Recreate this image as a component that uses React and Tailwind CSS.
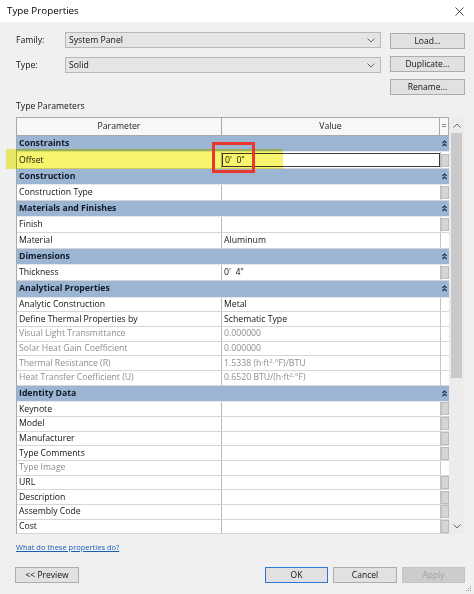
import React from "react";

const Chev = ({ up = false, className = "" }) => (
  <svg width="8" height="5" viewBox="0 0 8 5" className={className}>
    <path d={up ? "M0.5 4.5 L4 1 L7.5 4.5" : "M0.5 0.5 L4 4 L7.5 0.5"} fill="none" stroke="#666" strokeWidth="1" />
  </svg>
);

const DoubleUp = () => (
  <svg width="5" height="7" viewBox="0 0 5 7">
    <path d="M0.5 3 L2.5 1 L4.5 3 M0.5 6 L2.5 4 L4.5 6" fill="none" stroke="#1d2f4f" strokeWidth="1.1" />
  </svg>
);

const sections = [
  {
    title: "Constraints",
    h: "h-[16px]",
    rows: [{ p: "Offset", v: "0'  0\"", btn: true, edit: true, h: "h-[17px]" }],
  },
  {
    title: "Construction",
    h: "h-[16px]",
    rows: [{ p: "Construction Type", v: "", btn: true, h: "h-[16px]" }],
  },
  {
    title: "Materials and Finishes",
    h: "h-[16px]",
    rows: [
      { p: "Finish", v: "", btn: true, h: "h-[16px]" },
      { p: "Material", v: "Aluminum", btn: false, h: "h-[16px]" },
    ],
  },
  {
    title: "Dimensions",
    h: "h-[16px]",
    rows: [{ p: "Thickness", v: "0'  4\"", btn: true, h: "h-[16px]" }],
  },
  {
    title: "Analytical Properties",
    h: "h-[16.5px]",
    rows: [
      { p: "Analytic Construction", v: "Metal", h: "h-[14.7px]" },
      { p: "Define Thermal Properties by", v: "Schematic Type", h: "h-[14.7px]" },
      { p: "Visual Light Transmittance", v: "0.000000", gray: true, h: "h-[14.7px]" },
      { p: "Solar Heat Gain Coefficient", v: "0.000000", gray: true, h: "h-[14.7px]" },
      { p: "Thermal Resistance (R)", v: "1.5338 (h·ft²·°F)/BTU", gray: true, h: "h-[14.7px]" },
      { p: "Heat Transfer Coefficient (U)", v: "0.6520 BTU/(h·ft²·°F)", gray: true, h: "h-[14.7px]" },
    ],
  },
  {
    title: "Identity Data",
    h: "h-[16.5px]",
    rows: [
      { p: "Keynote", v: "", btn: true, h: "h-[14.7px]" },
      { p: "Model", v: "", btn: true, h: "h-[14.7px]" },
      { p: "Manufacturer", v: "", btn: true, h: "h-[14.7px]" },
      { p: "Type Comments", v: "", btn: true, h: "h-[14.7px]" },
      { p: "Type Image", v: "", gray: true, h: "h-[14.7px]" },
      { p: "URL", v: "", btn: true, h: "h-[14.7px]" },
      { p: "Description", v: "", btn: true, h: "h-[14.7px]" },
      { p: "Assembly Code", v: "", btn: true, h: "h-[14.7px]" },
      { p: "Cost", v: "", btn: true, h: "h-[14.7px]" },
    ],
  },
];

const variants = {
  normal: "bg-[#e1e1e1] border border-[#adadad] text-[#111]",
  primary: "bg-[#e1e1e1] border border-[#2a78d6] text-[#111]",
  disabled: "bg-[#cccccc] border border-[#c4c4c4] text-[#a3a3a3]",
};

const Btn = ({ children, className = "", variant = "normal" }) => (
  <div className={`h-[16px] flex items-center justify-center text-[8.5px] ${variants[variant]} ${className}`}>
    {children}
  </div>
);

const Row = ({ r }) => (
  <div className={`flex shrink-0 bg-white border-b border-[#d6d6d6] ${r.h} ${r.gray ? "text-[#8e8e8e]" : "text-[#141414]"}`}>
    <div className="w-[205px] flex items-center pl-[2px] border-r border-[#b9b9b9] whitespace-nowrap">{r.p}</div>
    <div className="w-[218px] flex items-center whitespace-pre">
      {r.edit ? (
        <div className="w-full h-[14px] border border-[#3c3c3c] flex items-center pl-[2px]">{r.v}</div>
      ) : (
        <span className="pl-[2px]">{r.v}</span>
      )}
    </div>
    <div className="w-[9px] flex items-center justify-center border-l border-[#c4c4c4]">
      {r.btn && <div className="w-[8px] h-[13px] bg-[#d5d5d5] border border-[#bcbcbc]" />}
    </div>
  </div>
);

export default function App() {
  return (
    <div className="relative w-[474px] h-[594px] overflow-hidden bg-[#f0f0f0] font-['Open_Sans',sans-serif] text-[8.7px] text-[#111] leading-none">
      {/* title bar */}
      <div className="h-[22px] bg-white flex items-center justify-between pl-[7px] pr-[10px]">
        <span className="text-[9.8px] text-black">Type Properties</span>
        <svg width="9" height="9" viewBox="0 0 9 9">
          <path d="M0.5 0.5 L8.5 8.5 M8.5 0.5 L0.5 8.5" stroke="#333" strokeWidth="0.9" />
        </svg>
      </div>

      <div className="pl-[16px] pr-[9px] pt-[10px]">
        {/* top controls */}
        <div className="flex">
          <div className="w-[365px] flex flex-col">
            <div className="flex items-center h-[16px]">
              <span className="w-[49px]">Family:</span>
              <div className="w-[316px] h-[16px] bg-[#e5e5e5] border border-[#b8b8b8] flex items-center justify-between pl-[3px] pr-[5px]">
                <span>System Panel</span>
                <Chev />
              </div>
            </div>
            <div className="flex items-center h-[16px] mt-[9px]">
              <span className="w-[49px]">Type:</span>
              <div className="w-[316px] h-[16px] bg-[#e5e5e5] border border-[#b8b8b8] flex items-center justify-between pl-[3px] pr-[5px]">
                <span>Solid</span>
                <Chev />
              </div>
            </div>
          </div>
          <div className="ml-[9px] w-[75px] flex flex-col gap-[7px] pt-[1px]">
            <Btn>Load...</Btn>
            <Btn>Duplicate...</Btn>
            <Btn>Rename...</Btn>
          </div>
        </div>

        <div className="mt-[5px] leading-[12px]">Type Parameters</div>

        {/* table */}
        <div className="mt-[5px] flex w-[448px] h-[417px]">
          <div className="w-[433px] flex flex-col overflow-hidden border-l border-t border-[#a9a9a9]">
            <div className="flex shrink-0 h-[18px] bg-[#f7f7f7] border-b border-[#a9a9a9] text-[#222]">
              <div className="w-[205px] flex items-center justify-center border-r border-[#a9a9a9]">Parameter</div>
              <div className="w-[218px] flex items-center justify-center border-r border-[#a9a9a9]">Value</div>
              <div className="w-[9px] flex items-center justify-center border-r border-[#a9a9a9]">=</div>
            </div>
            {sections.map((s) => (
              <React.Fragment key={s.title}>
                <div className={`flex shrink-0 items-center bg-[#9cb5d3] border-b border-[#e4e9f0] font-bold text-[#0e1a2c] ${s.h}`}>
                  <span className="flex-1 pl-[2px]">{s.title}</span>
                  <span className="w-[9px] flex justify-center">
                    <DoubleUp />
                  </span>
                </div>
                {s.rows.map((r) => (
                  <Row key={r.p} r={r} />
                ))}
              </React.Fragment>
            ))}
          </div>
          {/* scrollbar */}
          <div className="w-[15px] flex flex-col bg-[#ececec]">
            <div className="h-[16px] flex items-center justify-center">
              <Chev up />
            </div>
            <div className="h-[245px] mx-[2px] bg-[#c9c9c9]" />
            <div className="flex-1" />
            <div className="h-[16px] flex items-center justify-center">
              <Chev />
            </div>
          </div>
        </div>

        <div className="mt-[7px] leading-[12px] text-[7.5px] text-[#1a5fb4] underline">What do these properties do?</div>

        <div className="mt-[14px] flex justify-between -ml-[1px]">
          <Btn className="w-[64px]">&lt;&lt; Preview</Btn>
          <div className="flex gap-[5px]">
            <Btn className="w-[63px]" variant="primary">OK</Btn>
            <Btn className="w-[64px]">Cancel</Btn>
            <Btn className="w-[63px]" variant="disabled">Apply</Btn>
          </div>
        </div>
      </div>

      {/* resize grip */}
      <svg className="absolute right-[2px] bottom-[2px]" width="6" height="6" viewBox="0 0 6 6">
        <rect x="4" y="0" width="1" height="1" fill="#999" />
        <rect x="2" y="2" width="1" height="1" fill="#999" />
        <rect x="4" y="2" width="1" height="1" fill="#999" />
        <rect x="0" y="4" width="1" height="1" fill="#999" />
        <rect x="2" y="4" width="1" height="1" fill="#999" />
        <rect x="4" y="4" width="1" height="1" fill="#999" />
      </svg>

      {/* annotation overlays */}
      <div className="absolute left-[6px] top-[149px] w-[277px] h-[20px] bg-[#f6f45c] mix-blend-multiply opacity-90" />
      <div className="absolute left-[212px] top-[142px] w-[43px] h-[31px] border-[3px] border-[#e8372e]" />
    </div>
  );
}
